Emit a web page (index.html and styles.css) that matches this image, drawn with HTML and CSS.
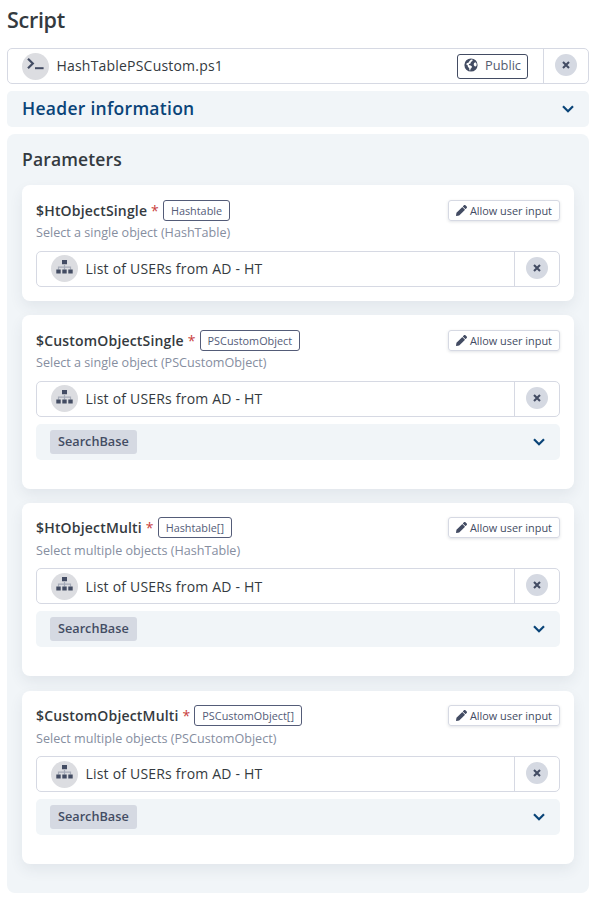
FILE: index.html
```html
<!DOCTYPE html>
<html lang="en">
<head>
    <meta charset="UTF-8">
    <meta name="viewport" content="width=device-width, initial-scale=1.0">
    <title>Script</title>
    <link rel="stylesheet" href="styles.css">
</head>
<body>
    <svg class="sprite" width="0" height="0">
        <symbol id="terminal" viewBox="0 0 17 12">
            <path d="M1 .8 5.8 5.5 1 10.2" fill="none" stroke="currentColor" stroke-width="2.2"/>
            <path d="M8 9.2h8.6v2H8z" fill="currentColor"/>
        </symbol>
        <symbol id="sitemap" viewBox="0 0 17 14">
            <path d="M8.5 5v4.5M2.5 9.5V7.2h12v2.3" fill="none" stroke="#a6abb8" stroke-width="1.2"/>
            <path d="M6 0h5v4.2H6zM.3 9.5h4.4v4H.3zM6.3 9.5h4.4v4H6.3zM12.3 9.5h4.4v4h-4.4z" fill="currentColor"/>
        </symbol>
        <symbol id="close" viewBox="0 0 8 8">
            <path d="M1 1l6 6M7 1L1 7" fill="none" stroke="currentColor" stroke-width="2.1"/>
        </symbol>
        <symbol id="chevron" viewBox="0 0 12 8">
            <path d="M1 1.2l5 5 5-5" fill="none" stroke="currentColor" stroke-width="2.2"/>
        </symbol>
        <symbol id="pencil" viewBox="0 0 512 512">
            <path fill="currentColor" d="M498 142l-46 46c-5 5-12 5-17 0L324 77c-5-5-5-12 0-17l46-46c19-19 49-19 68 0l60 60c19 19 19 49 0 68zM284 100L22 362 .4 484c-3 16 11 30 28 28l121-22 262-262c5-5 5-12 0-17L301 100c-5-5-12-5-17 0z"/>
        </symbol>
        <symbol id="globe" viewBox="0 0 14 14">
            <circle cx="7" cy="7" r="6.6" fill="currentColor"/>
            <path fill="#fff" d="M7.2 1.5l1.6.2-.5 1.3-1.4.9-.4 1.6-1.5.4-.2 1.1 1.8.5 1.4 1.1-.5 1.3-.9.9-.4 1.6-.8-.2-.2-2-1.3-1.5-.4-1.6-1.3-.6.5-1.2 2-.8.8-1.5zM10 5l1.5-.8 1 1.4.2 1.6-1 1.4-1.1-.3-.9-1.3z"/>
        </symbol>
    </svg>

    <h1>Script</h1>

    <div class="picker">
        <span class="picker-icon"><svg class="icon-terminal"><use href="#terminal"/></svg></span>
        <span class="picker-name">HashTablePSCustom.ps1</span>
        <span class="public"><svg><use href="#globe"/></svg>Public</span>
        <button class="clear"><span><svg><use href="#close"/></svg></span></button>
    </div>

    <div class="bar header-bar">
        <h2>Header information</h2>
        <svg class="chevron"><use href="#chevron"/></svg>
    </div>

    <div class="parameters">
        <h2>Parameters</h2>

        <div class="card">
            <div class="card-title">
                <label>$HtObjectSingle <em>*</em></label>
                <span class="type">Hashtable</span>
                <button class="allow"><svg><use href="#pencil"/></svg>Allow user input</button>
            </div>
            <p>Select a single object (HashTable)</p>
            <div class="picker">
                <span class="picker-icon"><svg class="icon-sitemap"><use href="#sitemap"/></svg></span>
                <span class="picker-name">List of USERs from AD - HT</span>
                <button class="clear"><span><svg><use href="#close"/></svg></span></button>
            </div>
        </div>

        <div class="card card-search">
            <div class="card-title">
                <label>$CustomObjectSingle <em>*</em></label>
                <span class="type">PSCustomObject</span>
                <button class="allow"><svg><use href="#pencil"/></svg>Allow user input</button>
            </div>
            <p>Select a single object (PSCustomObject)</p>
            <div class="picker">
                <span class="picker-icon"><svg class="icon-sitemap"><use href="#sitemap"/></svg></span>
                <span class="picker-name">List of USERs from AD - HT</span>
                <button class="clear"><span><svg><use href="#close"/></svg></span></button>
            </div>
            <div class="bar">
                <span class="chip">SearchBase</span>
                <svg class="chevron"><use href="#chevron"/></svg>
            </div>
        </div>

        <div class="card card-search">
            <div class="card-title">
                <label>$HtObjectMulti <em>*</em></label>
                <span class="type">Hashtable[]</span>
                <button class="allow"><svg><use href="#pencil"/></svg>Allow user input</button>
            </div>
            <p>Select multiple objects (HashTable)</p>
            <div class="picker">
                <span class="picker-icon"><svg class="icon-sitemap"><use href="#sitemap"/></svg></span>
                <span class="picker-name">List of USERs from AD - HT</span>
                <button class="clear"><span><svg><use href="#close"/></svg></span></button>
            </div>
            <div class="bar">
                <span class="chip">SearchBase</span>
                <svg class="chevron"><use href="#chevron"/></svg>
            </div>
        </div>

        <div class="card card-search">
            <div class="card-title">
                <label>$CustomObjectMulti <em>*</em></label>
                <span class="type">PSCustomObject[]</span>
                <button class="allow"><svg><use href="#pencil"/></svg>Allow user input</button>
            </div>
            <p>Select multiple objects (PSCustomObject)</p>
            <div class="picker">
                <span class="picker-icon"><svg class="icon-sitemap"><use href="#sitemap"/></svg></span>
                <span class="picker-name">List of USERs from AD - HT</span>
                <button class="clear"><span><svg><use href="#close"/></svg></span></button>
            </div>
            <div class="bar">
                <span class="chip">SearchBase</span>
                <svg class="chevron"><use href="#chevron"/></svg>
            </div>
        </div>
    </div>
</body>
</html>
```
FILE: styles.css
```css
* {
    box-sizing: border-box;
}
body {
    font-family: "Open Sans", sans-serif;
    font-size: 14px;
    color: #343a40;
    margin: 0;
    padding: 5px 7px 0;
    background-color: white;
}
.sprite {
    display: block;
}
h1, h2, p {
    margin: 0;
}
h1 {
    font-size: 21.5px;
    font-weight: 600;
    letter-spacing: -0.3px;
    line-height: 30px;
    margin-bottom: 13px;
}
h2 {
    font-size: 17.5px;
    font-weight: 600;
    letter-spacing: 0.15px;
    line-height: 24px;
}
button {
    font-family: inherit;
    background: none;
    border: none;
    padding: 0;
    cursor: pointer;
}
.picker {
    display: flex;
    align-items: center;
    height: 36px;
    padding-left: 14px;
    border: 1px solid #d6d9e3;
    border-radius: 5px;
    background-color: white;
}
.picker-icon {
    display: flex;
    align-items: center;
    justify-content: center;
    width: 27px;
    height: 27px;
    margin-right: 7.5px;
    border-radius: 50%;
    background-color: #dcdde1;
    color: #434c63;
}
.icon-terminal {
    width: 17px;
    height: 12px;
    margin-bottom: 4px;
}
.icon-sitemap {
    width: 17px;
    height: 14px;
    margin-bottom: 4px;
}
.picker-name {
    flex: 1;
    padding-bottom: 1.3px;
    letter-spacing: 0.2px;
}
.card .picker-name {
    padding-bottom: 0.8px;
}
.public {
    display: flex;
    align-items: center;
    height: 25px;
    padding: 0 6px 3px 6px;
    margin-right: 15px;
    border: 1px solid #434c63;
    border-radius: 3px;
    font-size: 12.8px;
    color: #545c70;
}
.public svg {
    width: 14px;
    height: 14px;
    margin-right: 7px;
    color: #434c63;
}
.clear {
    display: flex;
    align-items: center;
    justify-content: center;
    width: 45px;
    height: 34px;
    padding-bottom: 2px;
    border-left: 1px solid #d6d9e3;
}
.clear span {
    display: flex;
    align-items: center;
    justify-content: center;
    width: 22px;
    height: 22px;
    border-radius: 50%;
    background-color: #d5d9e2;
    color: #434c63;
}
.clear svg {
    width: 8px;
    height: 8px;
}
.bar {
    display: flex;
    align-items: center;
    justify-content: space-between;
    height: 36px;
    margin-top: 7px;
    padding: 0 15px 0 14px;
    border-radius: 5px;
    background-color: #f1f5f8;
}
.chevron {
    width: 12px;
    height: 8px;
    color: #0a4478;
}
.header-bar {
    padding-left: 15px;
}
.header-bar h2 {
    padding-bottom: 2px;
    letter-spacing: 0.28px;
    color: #0a4478;
}
.parameters {
    margin-top: 7px;
    padding: 13px 15px 29px;
    border-radius: 8px;
    background-color: #f1f5f8;
}
.parameters h2 {
    margin-bottom: 14px;
}
.card {
    height: 116px;
    padding: 14.55px 14px 0;
    border-radius: 8px;
    background-color: white;
    box-shadow: 0 6px 14px rgba(52, 64, 84, 0.08);
}
.card-search {
    height: 173.5px;
    margin-top: 14.2px;
}
.card-title {
    display: flex;
    align-items: center;
    height: 21px;
}
.card label {
    font-weight: 600;
    letter-spacing: 0.18px;
}
.card em {
    font-style: normal;
    font-weight: 400;
    color: #c9403c;
}
.type {
    height: 21px;
    margin-left: 4px;
    padding: 0 7px;
    border: 1px solid #545c78;
    border-radius: 3px;
    font-size: 10.85px;
    line-height: 19px;
    color: #545c78;
}
.allow {
    display: flex;
    align-items: center;
    height: 21px;
    margin-left: auto;
    padding: 0 7px;
    border: 1px solid #d6d9e3;
    border-radius: 3px;
    box-shadow: 0 1px 3px rgba(52, 64, 84, 0.15);
    font-size: 10.9px;
    color: #434c63;
}
.allow svg {
    width: 11px;
    height: 11px;
    margin-right: 3px;
}
.card p {
    height: 20px;
    margin: 2.5px 0 7.5px;
    font-size: 12.6px;
    line-height: 20px;
    color: #868e9f;
}
.chip {
    height: 24px;
    padding: 0 8px;
    border-radius: 3px;
    background-color: #d5d9e2;
    color: #434c63;
    font-size: 12.7px;
    font-weight: 600;
    line-height: 22.4px;
}
```
